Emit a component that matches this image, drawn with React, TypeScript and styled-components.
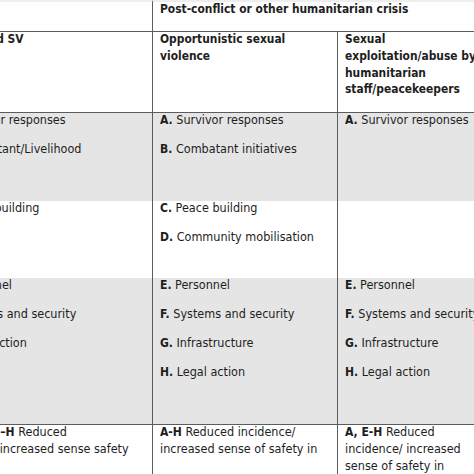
import React from 'react';
import styled, { createGlobalStyle } from 'styled-components';

const GlobalStyle = createGlobalStyle`
  html, body {
    margin: 0;
    padding: 0;
    background: #ffffff;
  }
  body {
    font-family: "DejaVu Sans Condensed", "DejaVu Sans", sans-serif;
    color: #1e1e1e;
  }
`;

// The screenshot is a crop of a wider table, so the first column runs off the left edge
const Frame = styled.div`
  width: 474px;
  height: 474px;
  overflow: hidden;
  background: #fff;
`;

const Table = styled.div`
  display: grid;
  grid-template-columns: 218px 185px 240px;
  grid-template-rows: 32px 81px 88px 77px 147px 70px;
  margin-left: -65px;
  font-size: 12.5px;
  line-height: 16.8px;
`;

const Cell = styled.div<{ $shade?: boolean; $last?: boolean; $bottom?: 'dark' | 'none'; $span?: number; $top?: boolean }>`
  box-sizing: border-box;
  padding: 0 0 0 7px;
  overflow: hidden;
  background: ${(p) => (p.$shade ? '#e5e5e5' : '#ffffff')};
  border-right: ${(p) => (p.$last ? 'none' : '1px solid #5c5c5c')};
  border-bottom: ${(p) => (p.$bottom === 'dark' ? '1px solid #5c5c5c' : 'none')};
  border-top: ${(p) => (p.$top ? '2px solid #eeeeee' : 'none')};
  grid-column: ${(p) => (p.$span ? `span ${p.$span}` : 'auto')};
`;

const Head = styled.div`
  font-weight: 700;
  font-size: 11.9px;
  margin-top: -1px;
`;

const Item = styled.p`
  margin: -1px 0 12.2px 0;
  white-space: nowrap;
  &:not(:first-child) {
    margin-top: 0;
  }
`;

const Key = styled.b`
  font-weight: 700;
  font-size: 12px;
`;

type Entry = { key: string; text: string };

const List: React.FC<{ items: Entry[] }> = ({ items }) => (
  <>
    {items.map((it) => (
      <Item key={it.key + it.text}>
        <Key>{it.key}</Key> {it.text}
      </Item>
    ))}
  </>
);

export default function App() {
  return (
    <Frame>
      <GlobalStyle />
      <Table>
        <Cell $top $bottom="dark" />
        <Cell $top $bottom="dark" $span={2} $last>
          <Head>Post-conflict or other humanitarian crisis</Head>
        </Cell>

        <Cell $bottom="dark">
          <Head>Organised SV</Head>
        </Cell>
        <Cell $bottom="dark">
          <Head>
            Opportunistic sexual
            <br />
            violence
          </Head>
        </Cell>
        <Cell $bottom="dark" $last>
          <Head>
            Sexual
            <br />
            exploitation/abuse by
            <br />
            humanitarian
            <br />
            staff/peacekeepers
          </Head>
        </Cell>

        <Cell $shade>
          <List
            items={[
              { key: 'A.', text: 'Survivor responses' },
              { key: 'B.', text: 'Combatant/Livelihood' },
            ]}
          />
        </Cell>
        <Cell $shade>
          <List
            items={[
              { key: 'A.', text: 'Survivor responses' },
              { key: 'B.', text: 'Combatant initiatives' },
            ]}
          />
        </Cell>
        <Cell $shade $last>
          <List items={[{ key: 'A.', text: 'Survivor responses' }]} />
        </Cell>

        <Cell>
          <List items={[{ key: 'C.', text: 'Peace building' }]} />
        </Cell>
        <Cell>
          <List
            items={[
              { key: 'C.', text: 'Peace building' },
              { key: 'D.', text: 'Community mobilisation' },
            ]}
          />
        </Cell>
        <Cell $last />

        <Cell $shade $bottom="dark">
          <List
            items={[
              { key: 'E.', text: 'Personnel' },
              { key: 'F.', text: 'Systems and security' },
              { key: 'G.', text: 'Legal action' },
            ]}
          />
        </Cell>
        <Cell $shade $bottom="dark">
          <List
            items={[
              { key: 'E.', text: 'Personnel' },
              { key: 'F.', text: 'Systems and security' },
              { key: 'G.', text: 'Infrastructure' },
              { key: 'H.', text: 'Legal action' },
            ]}
          />
        </Cell>
        <Cell $shade $bottom="dark" $last>
          <List
            items={[
              { key: 'E.', text: 'Personnel' },
              { key: 'F.', text: 'Systems and security' },
              { key: 'G.', text: 'Infrastructure' },
              { key: 'H.', text: 'Legal action' },
            ]}
          />
        </Cell>

        <Cell>
          <Item>
            <Key>A, B, D, G–H</Key> Reduced
            <br />
            incidence/increased sense safety
          </Item>
        </Cell>
        <Cell>
          <Item>
            <Key>A-H</Key> Reduced incidence/
            <br />
            increased sense of safety in
          </Item>
        </Cell>
        <Cell $last>
          <Item>
            <Key>A, E-H</Key> Reduced
            <br />
            incidence/ increased
            <br />
            sense of safety in
          </Item>
        </Cell>
      </Table>
    </Frame>
  );
}
